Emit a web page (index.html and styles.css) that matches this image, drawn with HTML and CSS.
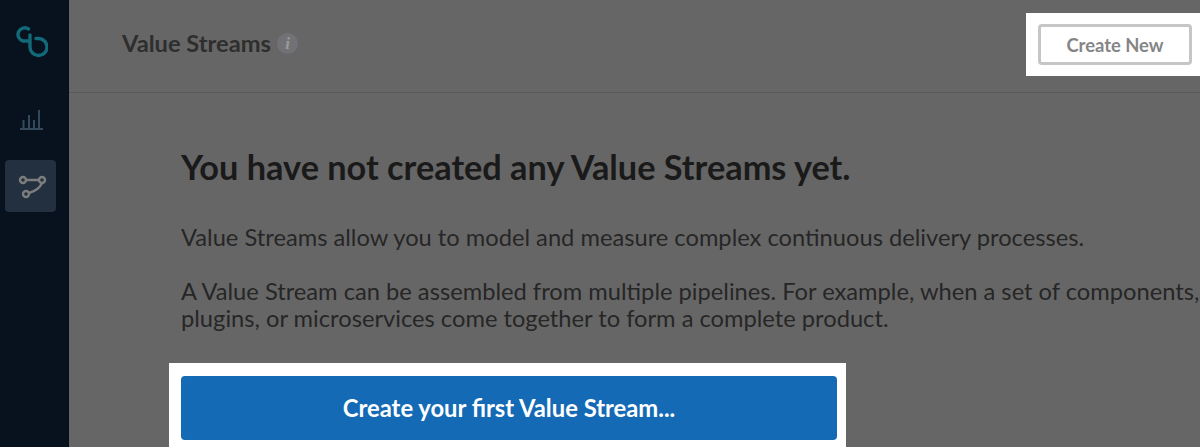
FILE: index.html
```html
<!DOCTYPE html>
<html lang="en">
<head>
<meta charset="utf-8">
<title>Value Streams</title>
<link rel="stylesheet" href="styles.css">
</head>
<body>
<div class="app">
  <nav class="sidebar">
    <svg class="logo" width="34" height="34" viewBox="0 0 34 34" fill="none" stroke="#126a78" stroke-width="3.4">
      <path d="M14.5 5 A6.7 6.7 0 1 0 9 17 H14.5 M16 11 V23 A8.5 8.5 0 1 0 24.5 14.5 H22" stroke-linecap="round"/>
    </svg>
    <svg class="chart" width="25" height="22" viewBox="0 0 25 22" fill="none" stroke="#33495b" stroke-width="2">
      <path d="M1 20 H24 M4.5 20 V11 M10 20 V6 M15 20 V11 M20 20 V1"/>
    </svg>
    <div class="nav-active">
      <svg width="32" height="26" viewBox="0 0 32 26" fill="none" stroke="#7d7d7d" stroke-width="2.4">
        <circle cx="8" cy="7" r="3"/><circle cx="27" cy="7" r="3"/><circle cx="11" cy="21" r="3"/>
        <path d="M11 7 H24 M27 10 Q24 17 14 20"/>
      </svg>
    </div>
  </nav>
  <main class="main">
    <header class="topbar">
      <div class="title-group">
        <h2 class="title">Value Streams</h2>
        <span class="info">i</span>
      </div>
      <div class="spot spot-top"><button class="btn-new">Create New</button></div>
    </header>
    <section class="content">
      <h1 class="headline">You have not created any Value Streams yet.</h1>
      <p class="para first">Value Streams allow you to model and measure complex continuous delivery processes.</p>
      <p class="para second">A Value Stream can be assembled from multiple pipelines. For example, when a set of components, plugins, or microservices come together to form a complete product.</p>
      <div class="spot spot-main"><button class="btn-first">Create your first Value Stream...</button></div>
    </section>
  </main>
</div>
</body>
</html>
```
FILE: styles.css
```css
html, body { margin: 0; height: 100%; overflow: hidden; }
body { font-family: Lato, "Open Sans", sans-serif; background: #666; }
.app { display: flex; height: 447px; }
.sidebar {
  width: 69px; flex: none; background: #07121e; border-right: 1px solid #050d16;
  box-sizing: border-box; display: flex; flex-direction: column; align-items: flex-start;
  padding-top: 24px;
}
.logo { margin-left: 14px; }
.chart { margin: 51px 0 0 19px; }
.nav-active {
  width: 51px; height: 52px; margin: 29px 0 0 5px; border-radius: 4px; background: #22303f;
  display: flex; align-items: center; justify-content: center;
}
.main { flex: 1; min-width: 0; }
.topbar {
  height: 93px; box-sizing: border-box; border-bottom: 1px solid #5a5a5a;
  display: flex; align-items: flex-start; justify-content: space-between;
  padding: 13px 0 0 53px;
}
.title-group { display: flex; align-items: center; gap: 6px; margin-top: 14px; height: 32px; }
.title { margin: 0; font-size: 23.7px; font-weight: 700; color: #2e2e2e; }
.info {
  width: 21px; height: 21px; border-radius: 50%; background: #727276; color: #9a9a9a;
  font: italic 700 17px/21px "Liberation Serif", serif; text-align: center;
}
.spot { background: #fff; }
.spot-top { width: 174px; height: 63px; box-sizing: border-box; padding: 11px 8px 11px 12px; }
.btn-new {
  width: 100%; height: 41px; background: #fff; border: 3px solid #c6c6c6; border-radius: 4px;
  font: 700 18.4px Lato, sans-serif; color: #858585; padding: 0;
}
.content { padding: 50px 0 0 112px; }
.headline { margin: 0; font-size: 34.3px; line-height: 48px; font-weight: 700; color: #1a1a1a; white-space: nowrap; }
.para { margin: 0; font-size: 23.7px; line-height: 27px; color: #262626; width: 1020px; }
.first { margin-top: 33px; }
.second { margin-top: 27px; }
.spot-main { width: 677px; height: 84px; box-sizing: border-box; margin: 31px 0 0 -12px; padding: 13px 9px 7px 12px; }
.btn-first {
  width: 100%; height: 64px; background: #156ab5; border: none; border-radius: 4px;
  font: 700 23.8px Lato, sans-serif; color: #fff; padding: 0;
}
```
